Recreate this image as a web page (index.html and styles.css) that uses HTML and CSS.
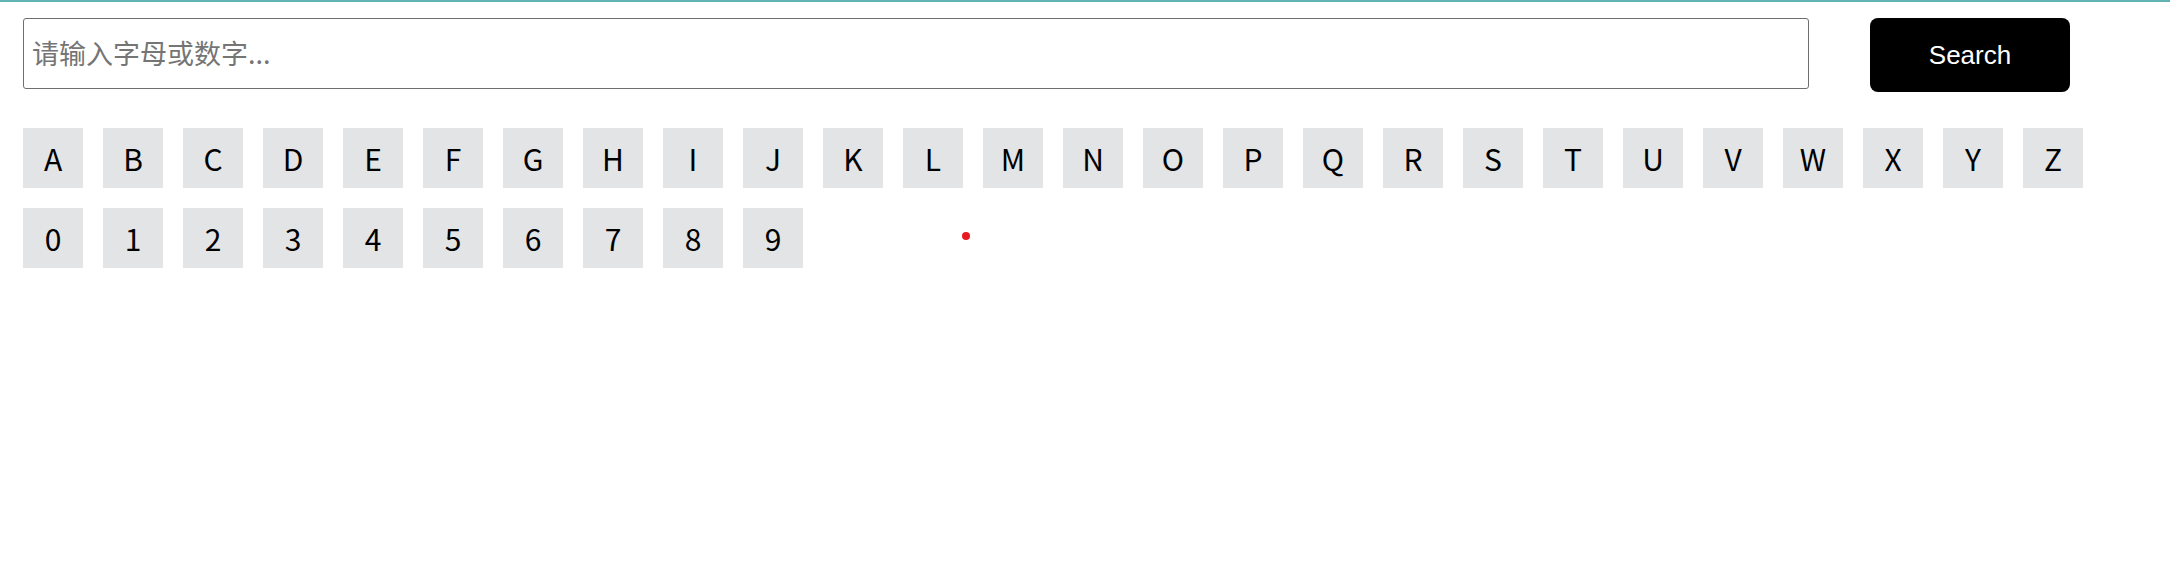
FILE: index.html
```html
<!DOCTYPE html>
<html lang="zh-CN">
<head>
    <meta charset="UTF-8">
    <meta name="viewport" content="width=device-width, initial-scale=1.0">
    <title>字母数字查询</title>
    <link rel="stylesheet" href="styles.css">
</head>
<body>
    <div class="search-bar">
        <input type="text" class="search-input" placeholder="请输入字母或数字...">
        <button class="search-button">Search</button>
    </div>
    <div class="key-row" id="letters"></div>
    <div class="key-row" id="digits"></div>
    <div class="dot"></div>

    <script>
        const letters = document.getElementById('letters');
        const digits = document.getElementById('digits');

        // Build the letter keys A-Z
        for (let i = 0; i < 26; i++) {
            const key = document.createElement('div');
            key.classList.add('key');
            key.textContent = String.fromCharCode(65 + i);
            letters.appendChild(key);
        }

        // Build the digit keys 0-9
        for (let i = 0; i < 10; i++) {
            const key = document.createElement('div');
            key.classList.add('key');
            key.textContent = i;
            digits.appendChild(key);
        }
    </script>
</body>
</html>
```

FILE: styles.css
```css
body {
    margin: 0;
    border-top: 2px solid #62b3b3;
    padding: 16px 23px;
    background-color: #fff;
    font-family: "Noto Sans CJK SC", "Noto Sans", sans-serif;
    position: relative;
    min-height: 530px;
}
.search-bar {
    display: flex;
    align-items: flex-start;
    gap: 61px;
}
.search-input {
    width: 1786px;
    height: 71px;
    box-sizing: border-box;
    border: 1px solid #6e6e6e;
    border-radius: 3px;
    padding: 0 8px 2px;
    font-family: "Noto Sans CJK SC", sans-serif;
    font-size: 27px;
    color: #222;
}
.search-input::placeholder {
    color: #757575;
}
.search-button {
    width: 200px;
    height: 74px;
    background-color: #000;
    color: #fff;
    border: none;
    border-radius: 8px;
    font-family: "Liberation Sans", Arial, sans-serif;
    font-size: 26px;
    cursor: pointer;
}
.key-row {
    display: flex;
    gap: 20px;
    margin-top: 20px;
}
#letters {
    margin-top: 36px;
}
.key {
    width: 60px;
    height: 60px;
    background-color: #e3e4e6;
    color: #000;
    font-size: 30px;
    display: flex;
    align-items: center;
    justify-content: center;
    cursor: pointer;
}
.dot {
    position: absolute;
    left: 962px;
    top: 230px;
    width: 8px;
    height: 8px;
    border-radius: 50%;
    background-color: #e8191f;
}
```
